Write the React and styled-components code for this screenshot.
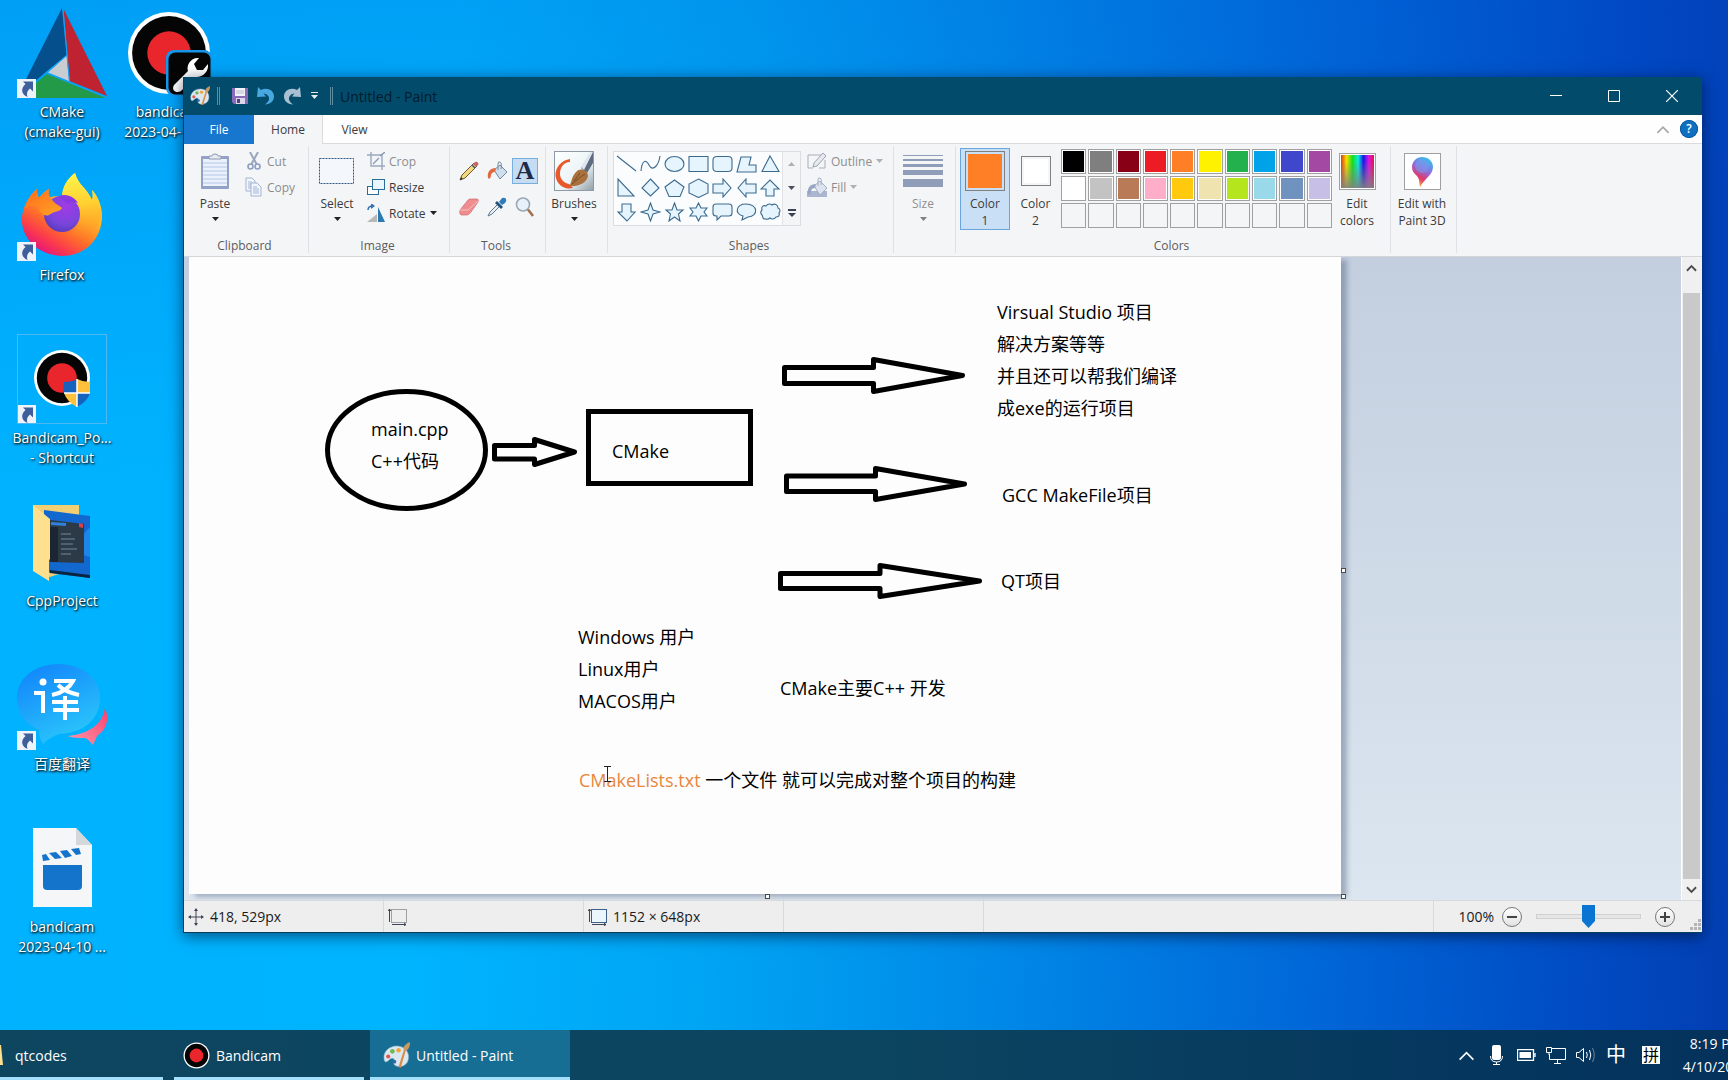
import React, { useState } from "react";
import styled, { createGlobalStyle, css } from "styled-components";

const GlobalStyle = createGlobalStyle`
  * {
    box-sizing: border-box;
  }
  html,
  body,
  #root {
    height: 100%;
  }
  body {
    margin: 0;
    overflow: hidden;
    font-family: "Open Sans", "Noto Sans CJK SC", sans-serif;
    font-size: 12px;
    color: #3b3b3b;
  }
  button {
    margin: 0;
    padding: 0;
    border: 0;
    background: none;
    font: inherit;
    color: inherit;
  }
  svg {
    display: block;
    flex: none;
  }
`;

/* ---------- desktop ---------- */

const Desktop = styled.div`
  position: relative;
  display: flex;
  flex-direction: column;
  height: 100vh;
  overflow: hidden;
  background: linear-gradient(
      180deg,
      rgba(0, 60, 200, 0.16),
      rgba(0, 60, 200, 0) 45%
    ),
    linear-gradient(
      93deg,
      #00b2ff 0%,
      #00b4fe 26%,
      #00a5f4 42%,
      #008ae8 58%,
      #0068d8 76%,
      #004cc4 91%,
      #033eb2 100%
    );
`;
const ShortcutGrid = styled.main`
  flex: 1;
  display: grid;
  grid-auto-flow: column;
  grid-template-rows: repeat(6, 163px);
  grid-auto-columns: 106px;
  padding: 8px 9px 0;
`;
const Shortcut = styled.button`
  display: flex;
  flex-direction: column;
  align-items: center;
  justify-content: flex-start;
  gap: 4px;
`;
const ShortcutIcon = styled.span`
  display: block;
  width: 90px;
  height: 90px;
  outline: ${(p) => (p.$focused ? "1px solid #4cb9f5" : "none")};
  outline-offset: -1px;
`;
const ShortcutLabel = styled.span`
  font-size: 14px;
  line-height: 20px;
  white-space: pre;
  color: #fff;
  text-shadow: 1px 1px 2px rgba(0, 0, 0, 0.9), 0 1px 3px rgba(0, 0, 0, 0.6);
`;

/* ---------- window frame ---------- */

const Window = styled.section`
  position: absolute;
  inset: 77px 26px 147px 183px;
  display: flex;
  flex-direction: column;
  border: 1px solid #06405c;
  border-width: 0 0 1px 1px;
  background: #fdfdfd;
  box-shadow: 0 3px 14px rgba(0, 10, 40, 0.6);
`;
const TitleBar = styled.header`
  display: flex;
  align-items: center;
  height: 38px;
  padding: 0 1px 0 6px;
  background: #034b6b;
`;
const QuickAccess = styled.div`
  display: flex;
  align-items: center;
`;
const QuickButton = styled.button`
  display: flex;
  align-items: center;
  justify-content: center;
  width: ${(p) => p.$width || 26}px;
  height: 22px;
`;
const TitleDivider = styled.span`
  width: 3px;
  height: 18px;
  margin: 0 7px;
  border: 1px solid #5f8ba0;
  border-width: 0 1px;
`;
const Title = styled.h1`
  flex: 1;
  margin: 0;
  font-size: 14px;
  font-weight: 400;
  color: #001c2c;
`;
const CaptionButton = styled.button`
  display: flex;
  align-items: center;
  justify-content: center;
  width: 58px;
  height: 38px;
`;

/* ---------- ribbon ---------- */

const TabBar = styled.nav`
  display: flex;
  align-items: center;
  height: 29px;
  border-bottom: 1px solid #dadbdc;
  background: #fefefe;
`;
const Tab = styled.button`
  width: ${(p) => p.$width}px;
  height: 29px;
  color: ${(p) => (p.$file ? "#fff" : "#3b3b3b")};
  background: ${(p) => (p.$file ? "#1777cf" : "transparent")};
  ${(p) =>
    p.$active &&
    css`
      border-right: 1px solid #dadbdc;
      background: #f4f5f7;
    `}
`;
const TabBarEnd = styled.div`
  display: flex;
  align-items: center;
  gap: 10px;
  margin-left: auto;
  padding-right: 4px;
`;
const HelpButton = styled.button`
  width: 18px;
  height: 18px;
  border-radius: 50%;
  background: #0f6fc0;
  box-shadow: inset 0 0 0 1px #0a5a9e;
  color: #fff;
  font-weight: 600;
  line-height: 18px;
`;
const Ribbon = styled.div`
  display: flex;
  height: 113px;
  padding: 2px 0 3px;
  border-bottom: 1px solid #d4d6d9;
  background: #f4f5f7;
`;
const RibbonGroup = styled.section`
  display: flex;
  flex-direction: column;
  justify-content: space-between;
  flex: none;
  width: ${(p) => p.$width}px;
  border-right: 1px solid #e0e1e4;
`;
const GroupBody = styled.div`
  display: flex;
  align-items: flex-start;
  gap: 2px;
  padding: 2px 0 0 ${(p) => p.$pad || 2}px;
`;
const GroupLabel = styled.h2`
  margin: 0;
  padding-right: 3px;
  font-size: 12px;
  font-weight: 400;
  line-height: 14px;
  text-align: center;
  color: #5c5c5c;
`;
const BigButton = styled.button`
  display: flex;
  flex-direction: column;
  align-items: center;
  width: ${(p) => p.$width || 52}px;
  height: 82px;
  border: 1px solid ${(p) => (p.$active ? "#6aa6dd" : "transparent")};
  background: ${(p) => (p.$active ? "#c9dff5" : "transparent")};
  line-height: 17px;
  white-space: pre;
  opacity: ${(p) => (p.$muted ? 0.55 : 1)};
`;
const BigIcon = styled.span`
  display: flex;
  align-items: center;
  justify-content: center;
  height: 44px;
  margin-bottom: 2px;
`;
const SmallStack = styled.div`
  display: flex;
  flex-direction: column;
  padding-left: ${(p) => p.$indent || 0}px;
`;
const SmallButton = styled.button`
  display: flex;
  align-items: center;
  gap: 4px;
  height: 26px;
  padding-left: 2px;
  color: ${(p) => (p.$muted ? "#8d8d8d" : "#3b3b3b")};
`;
const ToolGrid = styled.div`
  display: grid;
  grid-template-columns: repeat(3, 26px);
  gap: 10px 2px;
  padding-top: 10px;
`;
const ToolButton = styled.button`
  display: flex;
  align-items: center;
  justify-content: center;
  height: 26px;
  border: 1px solid ${(p) => (p.$active ? "#78aede" : "transparent")};
  background: ${(p) => (p.$active ? "#c6dcf3" : "transparent")};
`;
const LetterA = styled.span`
  font-family: "Liberation Serif", serif;
  font-size: 26px;
  font-weight: 700;
  line-height: 24px;
  color: #1c2b4a;
`;
const Framed = styled.span`
  display: block;
  padding: 1px;
  border: 1px solid #a0a0a0;
  background: #fff;
`;
const Gallery = styled.div`
  display: flex;
  height: 75px;
  margin-top: 3px;
  border: 1px solid #dcdde0;
  background: #fafcfe;
`;
const ShapeGrid = styled.div`
  display: grid;
  grid-template-columns: repeat(7, 24px);
  grid-auto-rows: 24px;
  border-right: 1px solid #e3e3e6;
`;
const ShapeButton = styled.button`
  display: flex;
  align-items: center;
  justify-content: center;
`;
const GalleryScroll = styled.div`
  display: grid;
  grid-template-rows: repeat(3, 1fr);
  width: 17px;
  background: #f4f5f7;
`;
const Swatch = styled.span`
  display: block;
  width: ${(p) => p.$size}px;
  height: ${(p) => p.$size}px;
  border: 1px solid #808080;
  padding: 2px;
  background: ${(p) => p.$color} content-box;
`;
const Palette = styled.div`
  display: grid;
  grid-template-columns: repeat(10, 1fr);
  grid-auto-rows: 25px;
  gap: 2px;
  width: 271px;
  padding-top: 1px;
`;
const PaletteCell = styled.button`
  padding: 1px;
  border: 1px solid #a0a0a0;
  background-clip: content-box;
  background-color: ${(p) => p.$color || "transparent"};
  box-shadow: ${(p) => (p.$color ? "inset 0 0 0 1px #fff" : "none")};
`;

/* ---------- canvas area ---------- */

const Workspace = styled.div`
  position: relative;
  flex: 1;
  display: flex;
  min-height: 0;
  overflow: hidden;
  background: linear-gradient(#c3cedf, #dce6f0);
`;
const SheetClip = styled.div`
  flex: 1;
  min-width: 0;
  overflow: hidden;
  padding: 0 0 6px 5px;
`;
const Sheet = styled.div`
  position: relative;
  width: 1152px;
  height: 100%;
  background: #fdfdfd;
  box-shadow: 6px 3px 5px rgba(70, 90, 120, 0.4);
`;
const Note = styled.p`
  position: absolute;
  left: ${(p) => p.$x}px;
  top: ${(p) => p.$y}px;
  margin: 0;
  font-size: 18px;
  line-height: 32px;
  white-space: pre;
  color: #000;
`;
const Orange = styled.span`
  color: #e8873e;
`;
const Drawing = styled.svg`
  position: absolute;
  left: 0;
  top: 0;
`;
const Handle = styled.span`
  position: absolute;
  left: ${(p) => p.$left};
  top: ${(p) => p.$top};
  width: 5px;
  height: 5px;
  border: 1px solid #4a4a4a;
  background: #fff;
`;
const ScrollBar = styled.div`
  display: flex;
  flex-direction: column;
  width: 21px;
  padding: 0 2px 0 1px;
  border-left: 1px solid #fff;
  background: #f0f0f1;
`;
const ScrollButton = styled.button`
  display: flex;
  align-items: center;
  justify-content: center;
  height: 21px;
`;
const ScrollTrack = styled.div`
  flex: 1;
  padding-top: 15px;
`;
const ScrollThumb = styled.div`
  height: 100%;
  background: #c9c9ca;
`;

/* ---------- status bar ---------- */

const StatusBar = styled.footer`
  display: flex;
  align-items: stretch;
  height: 32px;
  border-top: 1px solid #d8dade;
  background: #eeeeef;
  font-size: 14px;
  color: #1a1a1a;
`;
const StatusCell = styled.div`
  display: flex;
  align-items: center;
  gap: 6px;
  width: 200px;
  padding-left: 4px;
  border-right: 1px solid #d9d9da;
`;
const ZoomControls = styled.div`
  display: flex;
  align-items: center;
  gap: 8px;
  margin-left: auto;
  padding-left: 24px;
  border-left: 1px solid #d9d9da;
`;
const RoundButton = styled.button`
  display: flex;
  align-items: center;
  justify-content: center;
  width: 20px;
  height: 20px;
  border: 1px solid #777;
  border-radius: 50%;
  background: linear-gradient(#fff, #e2e2e2);
`;
const ZoomSlider = styled.input`
  appearance: none;
  width: 105px;
  height: 24px;
  margin: 0 6px;
  background: transparent;
  &::-webkit-slider-runnable-track {
    height: 5px;
    border: 1px solid #d0d0d0;
    background: #e6e6e6;
  }
  &::-webkit-slider-thumb {
    appearance: none;
    width: 13px;
    height: 23px;
    margin-top: -10px;
    background: #0a74d3;
    clip-path: polygon(0 0, 100% 0, 100% 70%, 50% 100%, 0 70%);
  }
`;
const Grip = styled.span`
  align-self: flex-end;
  margin: 0 1px 2px 7px;
`;

/* ---------- task bar ---------- */

const TaskBar = styled.nav`
  display: flex;
  align-items: stretch;
  gap: 6px;
  height: 50px;
  overflow: hidden;
  background: linear-gradient(90deg, #0e4660, #0c4560 50%, #05375e 85%, #04325c);
  color: #fff;
  font-size: 14px;
`;
const Task = styled.button`
  display: flex;
  align-items: center;
  gap: 6px;
  width: ${(p) => p.$width}px;
  padding: 3px 0 0 ${(p) => p.$pad}px;
  border-bottom: 3px solid #a4e0fb;
  background: ${(p) => (p.$active ? "#176e94" : "transparent")};
  &:first-child {
    margin: 0 5px 0 -29px;
  }
`;
const Tray = styled.div`
  display: flex;
  align-items: center;
  flex: none;
  gap: 8px;
  margin: 0 -22px 0 auto;
`;
const TrayButton = styled.button`
  display: flex;
  align-items: center;
  justify-content: center;
  width: ${(p) => p.$width || 22}px;
  height: 40px;
`;
const ImeMode = styled.span`
  font-size: 20px;
  line-height: 20px;
`;
const ImeBadge = styled.span`
  width: 18px;
  height: 18px;
  background: #fff;
  color: #000;
  font-size: 16px;
  line-height: 18px;
`;
const Clock = styled.time`
  width: 68px;
  margin-left: 7px;
  line-height: 23px;
  text-align: center;
  white-space: pre;
`;

/* ---------- icons ---------- */

const Caret = ({ color = "#222", up }) => (
  <svg width="7" height="4" viewBox="0 0 7 4">
    <path d={up ? "M0 4L3.5 0L7 4Z" : "M0 0H7L3.5 4Z"} fill={color} />
  </svg>
);

const CaretSpace = styled.span`
  display: flex;
  align-items: center;
  height: ${(p) => (p.$tall ? 13 : 8)}px;
`;

const Chevron = ({ w, h, color, down, stroke = 2 }) => (
  <svg width={w} height={h} viewBox="0 0 12 8" fill="none">
    <path
      d={down ? "M1 1L6 6L11 1" : "M1 7L6 2L11 7"}
      stroke={color}
      strokeWidth={stroke}
    />
  </svg>
);

const ArrowOverlay = () => (
  <g>
    <rect x="0" y="71" width="19" height="19" fill="#eef3f9" />
    <path
      d="M6 73.500H16V83.500L13 80.500C10 83 9.500 85.500 10.500 89C5.500 87 2.500 81.500 8.500 76Z"
      fill="#3f5f9c"
    />
  </g>
);

const CMakeIcon = () => (
  <svg width="90" height="90" viewBox="0 0 90 90">
    <path d="M45 0L49.500 47L30 63L0 89Z" fill="#064f8d" />
    <path d="M46.500 1L52.500 73L90 88Z" fill="#bf2230" />
    <path d="M30 66L90 90H0Z" fill="#239a48" />
    <path d="M49.500 48L52 73L31 64.500Z" fill="#c9cdd2" />
    <path
      d="M46 1L52.500 73.500M30 65.500L89 89.500M49.500 47.500L29 65"
      stroke="#1b9ff0"
      strokeWidth="1"
    />
    <ArrowOverlay />
  </svg>
);

const FirefoxIcon = () => (
  <svg width="90" height="90" viewBox="0 0 90 90">
    <defs>
      <linearGradient id="ffBody" x1="0.8" y1="0.1" x2="0.25" y2="1">
        <stop offset="0" stopColor="#ffe83f" />
        <stop offset="0.35" stopColor="#ffb02a" />
        <stop offset="0.6" stopColor="#ff7228" />
        <stop offset="0.8" stopColor="#fb3a4c" />
        <stop offset="1" stopColor="#e00f84" />
      </linearGradient>
      <linearGradient id="ffFlame" x1="0.4" y1="0" x2="0.5" y2="1">
        <stop offset="0" stopColor="#fff44b" />
        <stop offset="0.5" stopColor="#ffcf30" />
        <stop offset="1" stopColor="#ff8a22" stopOpacity="0" />
      </linearGradient>
      <linearGradient id="ffFox" x1="0" y1="0" x2="1" y2="1">
        <stop offset="0" stopColor="#ff6a1c" />
        <stop offset="1" stopColor="#ffa624" />
      </linearGradient>
      <radialGradient id="ffGlobe" cx="0.6" cy="0.3" r="0.8">
        <stop offset="0" stopColor="#a13be6" />
        <stop offset="0.6" stopColor="#7a45dc" />
        <stop offset="1" stopColor="#5038b8" />
      </radialGradient>
    </defs>
    <path
      d="M20 18C13 24 7 33 5 45C3 66 20 84 45 85C68 85 85 68 85 45C85 35 81 25 75 19C76 23 76 26 75 29C70 17 61 14 58 2C51 7 46 16 45 26C40 25 35 25 32 27C31 24 31 21 32 18C28 20 25 23 22 27C20 24 20 21 20 18Z"
      fill="url(#ffBody)"
    />
    <path
      d="M58 2C50 8 45 16 45 26C58 26 65 37 63 48C61 60 52 65 52 65C66 70 82 60 84 44C84 34 80 24 75 19C76 23 76 27 75 29C70 17 61 14 58 2Z"
      fill="url(#ffFlame)"
    />
    <circle cx="45" cy="43" r="18" fill="url(#ffGlobe)" />
    <path d="M42 25C51 22 58 27 61 32C56 30 52 31 50 33Z" fill="#8a38e0" />
    <path
      d="M20 18C13 24 9 31 8 38C13 33 18 34 22 36C22 42 28 46 32 44C37 40 43 41 45 37C42 34 37 33 34 27C32 25 31 21 32 18C28 20 25 23 22 27C20 24 20 21 20 18Z"
      fill="url(#ffFox)"
    />
    <ArrowOverlay />
  </svg>
);

const BandicamDisc = ({ cx, cy, r }) => (
  <g>
    <circle cx={cx} cy={cy} r={r} fill="#fff" />
    <circle cx={cx} cy={cy} r={r * 0.9} fill="#050505" />
    <circle cx={cx} cy={cy} r={r * 0.53} fill="#e8262b" />
  </g>
);

const BandicamToolIcon = () => (
  <svg width="90" height="90" viewBox="0 0 90 90">
    <BandicamDisc cx={46} cy={45} r={41} />
    <rect x="43" y="42" width="46" height="46" rx="8" fill="#1696ea" />
    <rect x="45.500" y="44.500" width="42" height="42" rx="7" fill="#050505" />
    <path
      d="M51 77L65 63C63 57 68 49 76 50L71 56L74 62L80 62L85 56C86 64 79 70 72 69L58 83C53 86 48 82 51 77Z"
      fill="#fff"
    />
  </svg>
);

const BandicamIcon = () => (
  <svg width="90" height="90" viewBox="0 0 90 90">
    <BandicamDisc cx={45} cy={44} r={28} />
    <path d="M60 45V59H47C46 55 47 50 47 48Q55 48 60 45Z" fill="#1662bd" />
    <path d="M60 45Q66 48 73 48C73 52 73 56 73 59H60Z" fill="#ffc13b" />
    <path d="M47 59H60V73Q50 68 47 59Z" fill="#ffc13b" />
    <path d="M73 59H60V73Q70 68 73 59Z" fill="#1662bd" />
    <path d="M60 45V73M47 59H73" stroke="#fff" strokeWidth="1.500" />
    <ArrowOverlay />
  </svg>
);

const FolderIcon = () => (
  <svg width="90" height="90" viewBox="0 0 90 90">
    <path d="M16 8H62V70L33 80L16 74Z" fill="#f2cf73" />
    <path d="M27 13L73 19V81L27 75Z" fill="#1368cf" />
    <path d="M62 42L73 30V60L66 58Z" fill="#1d86e8" />
    <path d="M33 23L67 27V66L33 65Z" fill="#2c3947" />
    <path d="M34 25L49 26V29L34 28Z" fill="#2f80d8" />
    <path d="M62 26L66 27V31L62 30Z" fill="#d8404a" />
    <path
      d="M44 37H54M44 42H58M44 47H56M44 52H60M44 57H54"
      stroke="#6f8a9c"
      strokeWidth="1"
    />
    <path d="M33 30H41V65H33Z" fill="#1b2632" />
    <path d="M33 73L73 78V81L33 76Z" fill="#0a2540" />
    <path d="M16 8L33 22V62L32 63V84L16 74Z" fill="#ffe08e" />
  </svg>
);

const TranslateIcon = () => (
  <svg width="90" height="90" viewBox="0 0 90 90">
    <defs>
      <linearGradient id="bubble" x1="0.2" y1="0" x2="0.7" y2="1">
        <stop offset="0" stopColor="#1286fb" />
        <stop offset="1" stopColor="#2cc9fb" />
      </linearGradient>
      <linearGradient id="ribbon" x1="1" y1="0" x2="0" y2="1">
        <stop offset="0" stopColor="#fb3f6f" />
        <stop offset="1" stopColor="#ff9aa8" />
      </linearGradient>
    </defs>
    <path
      d="M42 4C64 4 83 18 83 38C83 60 66 73 42 74C36 76 30 80 26 84C23 80 22 75 22 70C8 64 0 54 0 38C0 18 18 4 42 4Z"
      fill="url(#bubble)"
    />
    <path
      d="M88 48C92 58 91 68 80 76L76 85C73 82 71 79 68 78C62 78 56 78 51 76C70 74 85 66 88 48Z"
      fill="url(#ribbon)"
    />
    <circle cx="26" cy="22" r="3.500" fill="#fff" />
    <path
      d="M17 33H26V53M37 21H56C52 29 44 33 35 35M41 25C46 30 53 33 62 35M35 42H61M36 50H62M48 36V60"
      fill="none"
      stroke="#fff"
      strokeWidth="4"
    />
    <ArrowOverlay />
  </svg>
);

const VideoFileIcon = () => (
  <svg width="90" height="90" viewBox="0 0 90 90">
    <path d="M16 5H59L75 22V84H16Z" fill="#f5f6f7" />
    <path d="M59 5L75 22H59Z" fill="#d5d8db" />
    <path d="M26 42H65V63Q65 67 61 67H30Q26 67 26 63Z" fill="#1474cc" />
    <path
      d="M25 32L29 31L33 37L26 38ZM32 30L39 29L45 35L38 36ZM43 28L50 27L55 33L48 35ZM54 26L62 25L64 31L59 32Z"
      fill="#1474cc"
    />
  </svg>
);

const PaletteIcon = ({ size }) => (
  <svg width={size} height={size} viewBox="0 0 26 26">
    <path
      d="M1 16C0 8 8 3 15 4C23 5 26 12 24 18C22 24 14 25 11 22C9 20 12 17 10 16C7 14 5 20 2 19Q1 18 1 16Z"
      fill="#dbe8f2"
      stroke="#9ab4c6"
      strokeWidth="0.6"
    />
    <circle cx="5" cy="14" r="2" fill="#e0574b" />
    <circle cx="9" cy="9" r="2.200" fill="#6fb750" />
    <circle cx="15" cy="8" r="2.200" fill="#f2a53a" />
    <circle cx="11" cy="19" r="1.800" fill="#2e6aa8" />
    <path d="M20 8L22 8L17 25L15 24Z" fill="#d98b45" />
    <path d="M20 8C19 5 21 2 26 0C26 4 25 7 22 9Z" fill="#c69b62" />
  </svg>
);

const SaveIcon = () => (
  <svg width="16" height="16" viewBox="0 0 16 16">
    <path d="M0 0H16V16H2L0 14Z" fill="#8a6bb8" />
    <rect x="3" y="0" width="10" height="8" fill="#f3f4fa" />
    <path d="M4 3H12M4 5H12" stroke="#b8bcd0" strokeWidth="1" />
    <rect x="4" y="10" width="9" height="6" fill="#dcd8ea" />
    <rect x="5" y="11" width="3" height="4" fill="#54407c" />
  </svg>
);

const UndoIcon = ({ color, flip }) => (
  <svg width="18" height="18" viewBox="0 0 18 18">
    <g transform={flip ? "translate(18 0) scale(-1 1)" : undefined}>
      <path
        d="M1 0L4 3C10 0 17 3 17 9.500C17 14 13.500 17 8 17.500C11.500 15 13 12 11.500 9.500C10.500 7.500 8.500 6.500 6.500 6.500L9 9.500L0 10Z"
        fill={color}
      />
    </g>
  </svg>
);

const PasteIcon = () => (
  <svg width="30" height="37" viewBox="0 0 30 37">
    <rect x="1" y="3" width="28" height="33" rx="1" fill="#93a1c6" />
    <rect x="3" y="6" width="24" height="27" fill="#eaf1fb" />
    <path
      d="M3 10H27M3 14H27M3 18H27M3 22H27M3 26H27M3 30H27"
      stroke="#b4c6e6"
    />
    <path
      d="M9 6V3H12Q12 1 15 1Q18 1 18 3H21V6Z"
      fill="#e6ebf4"
      stroke="#8c97b0"
    />
  </svg>
);

const CutIcon = () => (
  <svg width="18" height="18" viewBox="0 0 18 18" fill="none">
    <path d="M5 0L11.500 12M13 0L6.500 12" stroke="#9aa7be" strokeWidth="2" />
    <circle cx="5.500" cy="14.500" r="2.500" stroke="#8d9cc0" strokeWidth="1.600" />
    <circle cx="12.500" cy="14.500" r="2.500" stroke="#8d9cc0" strokeWidth="1.600" />
  </svg>
);

const CopyIcon = () => (
  <svg width="18" height="20" viewBox="0 0 18 20" stroke="#a3b3d3">
    <path d="M1 1H7L10 4V14H1Z" fill="#f3f7fd" />
    <path d="M3 5H7M3 7H7M3 9H7M3 11H7" />
    <path d="M6 6H12L16 10V19H6Z" fill="#f3f7fd" />
    <path d="M8 10H12M8 12H14M8 14H14M8 16H14" />
  </svg>
);

const SelectIcon = () => (
  <svg width="36" height="28" viewBox="0 0 36 28">
    <rect
      x="0.500"
      y="1.500"
      width="34"
      height="25"
      fill="#f4f8fc"
      stroke="#2c5584"
      strokeWidth="1"
      strokeDasharray="2 1"
    />
  </svg>
);

const CropIcon = () => (
  <svg width="18" height="18" viewBox="0 0 18 18" fill="none">
    <path d="M0 3H15V18M4 0V14H18" stroke="#9aa8bf" strokeWidth="1.400" />
    <path d="M6 12L12 6M13 4L18 0" stroke="#8c9ab4" strokeWidth="1.400" />
  </svg>
);

const ResizeIcon = () => (
  <svg width="18" height="16" viewBox="0 0 18 16" stroke="#2c6d96">
    <rect x="0.500" y="7.500" width="11" height="8" fill="#fff" />
    <rect x="5.500" y="0.500" width="12" height="10" fill="#e9f6fd" />
  </svg>
);

const RotateIcon = () => (
  <svg width="18" height="18" viewBox="0 0 18 18">
    <path d="M0 18L10 10V18Z" fill="#b8b8b8" />
    <path d="M11 18V3L18 18Z" fill="#2a7ab0" />
    <path d="M1 6C1 3 3 2 6 2" fill="none" stroke="#3172b4" strokeWidth="1.500" />
    <path d="M4 -1L8 2L4 5Z" fill="#3172b4" />
  </svg>
);

const PencilIcon = () => (
  <svg width="20" height="20" viewBox="0 0 20 20">
    <path d="M1 19L3 14L15 2L18 5L6 17Z" fill="#f4d97c" stroke="#6b5a36" />
    <path d="M14 3L16 1Q18 0 19 2Q20 3 19 4L17 6Z" fill="#c9606a" />
    <path d="M13 4L16 7" stroke="#4a5a78" strokeWidth="1.600" />
    <path d="M1 19L2 16L4 18Z" fill="#333" />
  </svg>
);

const BucketIcon = ({ muted }) => (
  <svg width="20" height="20" viewBox="0 0 20 20">
    {muted && <rect x="0" y="14" width="20" height="6" fill="#aab6d0" />}
    <path
      d="M7 9L13 4L20 11L13 18Z"
      fill={muted ? "#dde3ee" : "#cfdfee"}
      stroke={muted ? "#a4aec2" : "#6d89a6"}
    />
    <path
      d="M11 9V3Q11 0 13 1Q15 2 14 8"
      fill="none"
      stroke={muted ? "#a4aec2" : "#7a8798"}
    />
    <path
      d="M9 7C3 7 0 11 1 17C3 19 4 16 4 14C5 11 7 11 8 11Z"
      fill={muted ? "#97a6c4" : "#e0693e"}
    />
  </svg>
);

const EraserIcon = () => (
  <svg width="20" height="18" viewBox="0 0 20 18">
    <path
      d="M1 12L9 2Q10 1 11 1H18Q20 1 19 4L12 14Q10 17 8 17H2Q0 16 1 12Z"
      fill="#ee8c8f"
      stroke="#cf7074"
      strokeWidth="0.7"
    />
    <path d="M1 12H9L19 3" fill="none" stroke="#f8c0c0" />
  </svg>
);

const PickerIcon = () => (
  <svg width="20" height="20" viewBox="0 0 20 20">
    <path d="M1 19L3 15L11 7L13 9L5 17Z" fill="#e8eff6" stroke="#5c7690" />
    <path d="M10 4L16 10L14 12L8 6Z" fill="#24527e" />
    <path d="M12 5L15 1Q18 0 19 2Q20 4 18 6L15 8Z" fill="#2e7cba" />
  </svg>
);

const MagnifierIcon = () => (
  <svg width="20" height="20" viewBox="0 0 20 20">
    <circle
      cx="8"
      cy="7.500"
      r="6.500"
      fill="#e6f1fa"
      stroke="#9aa8b4"
      strokeWidth="1.600"
    />
    <path d="M13 12.500L18 19" stroke="#a0714c" strokeWidth="2.600" />
  </svg>
);

const BrushIcon = () => (
  <svg width="40" height="40" viewBox="0 0 40 40">
    <defs>
      <linearGradient id="brushBg" x1="0" y1="0" x2="1" y2="1">
        <stop offset="0" stopColor="#fff" />
        <stop offset="0.6" stopColor="#eaf4f6" />
        <stop offset="1" stopColor="#8f9da6" />
      </linearGradient>
    </defs>
    <rect
      x="0.500"
      y="0.500"
      width="39"
      height="39"
      fill="url(#brushBg)"
      stroke="#8f9aa6"
    />
    <path
      d="M16 8C8 9 1 16 1.500 25C3 34 10 39 19 37L15 33C10 32 6 28 6 23C6 16 10 11 16 11Z"
      fill="#e8582a"
    />
    <path d="M27 17L38 1H39V12L33 22Z" fill="#5d6a80" />
    <path d="M27 16L36 1H39L30 19Z" fill="#dfe6ee" />
    <path
      d="M15 35C18 32 17 26 22 21C26 16 34 19 34 25C33 32 24 36 15 35Z"
      fill="#a9713d"
    />
    <path
      d="M18 33C23 29 26 26 31 23M20 30L26 22"
      stroke="#7a4a22"
      fill="none"
    />
  </svg>
);

const SizeIcon = () => (
  <svg width="40" height="34" viewBox="0 0 40 34" fill="#3d5688">
    <rect y="1" width="40" height="1" />
    <rect y="5" width="40" height="2" />
    <rect y="10" width="40" height="3" />
    <rect y="16" width="40" height="5" />
    <rect y="25" width="40" height="8" />
  </svg>
);

const OutlineIcon = () => (
  <svg width="20" height="18" viewBox="0 0 20 18" fill="none">
    <path d="M15 3H1V16H6M18 8V16H12" stroke="#a7adb8" />
    <path d="M6 15L7 11L16 1L19 4L10 14Z" fill="#e6e9ef" stroke="#9aa3b5" />
  </svg>
);

const RainbowIcon = () => (
  <svg width="33" height="33" viewBox="0 0 33 33">
    <defs>
      <linearGradient id="hue">
        <stop offset="0" stopColor="#e03a10" />
        <stop offset="0.17" stopColor="#f5e000" />
        <stop offset="0.35" stopColor="#10e020" />
        <stop offset="0.52" stopColor="#10e8e0" />
        <stop offset="0.68" stopColor="#1818e8" />
        <stop offset="0.84" stopColor="#d818e0" />
        <stop offset="1" stopColor="#e81040" />
      </linearGradient>
      <linearGradient id="fade" x2="0" y2="1">
        <stop offset="0.2" stopColor="#808080" stopOpacity="0" />
        <stop offset="1" stopColor="#808080" stopOpacity="0.900" />
      </linearGradient>
    </defs>
    <rect width="33" height="33" fill="url(#hue)" />
    <rect width="33" height="33" fill="url(#fade)" />
  </svg>
);

const Paint3DIcon = () => (
  <svg width="33" height="33" viewBox="0 0 33 33">
    <defs>
      <linearGradient id="drop" x1="0.7" y1="0" x2="0.3" y2="1">
        <stop offset="0" stopColor="#2fc4ee" />
        <stop offset="0.4" stopColor="#8a6fe0" />
        <stop offset="0.7" stopColor="#e0386c" />
        <stop offset="1" stopColor="#ffb030" />
      </linearGradient>
    </defs>
    <path
      d="M16 2C22 2 27 6 27 12C27 20 18 24 14 32C13 28 14 25 11 21C8 18 6 16 6 12C6 6 11 2 16 2Z"
      fill="url(#drop)"
    />
    <circle cx="16" cy="11" r="7" fill="#7aa0f0" opacity="0.500" />
  </svg>
);

const shapes = [
  ["Line", "M1 2L20 17"],
  ["Curve", "M1 17C2 6 6 5 9 11C13 19 19 10 20 2"],
  ["Oval", "M1 10A9.500 7.500 0 1 1 20 10A9.500 7.500 0 1 1 1 10Z"],
  ["Rectangle", "M1 2.500H20V17.500H1Z"],
  [
    "Rounded rectangle",
    "M5 2.500H16Q20 2.500 20 6V14Q20 17.500 16 17.500H5Q1 17.500 1 14V6Q1 2.500 5 2.500Z",
  ],
  ["Polygon", "M5 3H15L13 11H20V18H1Z"],
  ["Triangle", "M10 2L19 17.500H2Z"],
  ["Right triangle", "M2 1V18H18Z"],
  ["Diamond", "M10.500 1L19 10L10.500 18L2 10Z"],
  ["Pentagon", "M10.500 2L20 9L16 18.500H5L1 9Z"],
  ["Hexagon", "M10.500 1L20 6V15L10.500 19.500L1 15V6Z"],
  ["Right arrow", "M1 6H11V1L19 10L11 19V15H1Z"],
  ["Left arrow", "M20 6H10V1L2 10L10 19V15H20Z"],
  ["Up arrow", "M6 18V11H1L10 2L19 11H14V18Z"],
  ["Down arrow", "M6 2V10H2L11 19L19 10H15V2Z"],
  [
    "Four-point star",
    "M10.500 1L13 8L20 10L13 12L10.500 19L8 12L1 10L8 8Z",
  ],
  [
    "Five-point star",
    "M10.500 1L13 8H19L14.500 12L16 19L10.500 15L5 19L6.500 12L2 8H8Z",
  ],
  [
    "Six-point star",
    "M10.500 1L13 6H19L16 10L19 14H13L10.500 19L8 14H2L5 10L2 6H8Z",
  ],
  [
    "Rounded callout",
    "M4 2H17Q20 2 20 5V11Q20 14 17 14H9L5 18V14H4Q1 14 1 11V5Q1 2 4 2Z",
  ],
  ["Oval callout", "M6 18L7 14C-2 12 0 2 10 2C22 2 23 14 12 15Z"],
  [
    "Cloud callout",
    "M5 17C2 17 3 14 2 13C0 11 1 9 2 8C1 4 4 3 6 4C8 1 11 2 12 3C15 1 18 3 18 6C21 7 20 10 19 11C20 14 18 15 16 15C14 18 11 17 10 16C8 18 7 17 5 17Z",
  ],
];

const paletteColors = [
  ["Black", "#000000"],
  ["Gray 50%", "#7f7f7f"],
  ["Dark red", "#880015"],
  ["Red", "#ed1c24"],
  ["Orange", "#ff7f27"],
  ["Yellow", "#fff200"],
  ["Green", "#22b14c"],
  ["Turquoise", "#00a2e8"],
  ["Indigo", "#3f48cc"],
  ["Purple", "#a349a4"],
  ["White", "#ffffff"],
  ["Gray 25%", "#c3c3c3"],
  ["Brown", "#b97a57"],
  ["Rose", "#ffaec9"],
  ["Gold", "#ffc90e"],
  ["Light yellow", "#efe4b0"],
  ["Lime", "#b5e61d"],
  ["Light turquoise", "#99d9ea"],
  ["Blue-gray", "#7092be"],
  ["Lavender", "#c8bfe7"],
];
const emptySlots = Array.from({ length: 10 }, (_, i) => [`Custom ${i + 1}`]);

const shortcuts = [
  { label: "CMake\n(cmake-gui)", Icon: CMakeIcon },
  { label: "Firefox", Icon: FirefoxIcon },
  { label: "Bandicam_Po...\n- Shortcut", Icon: BandicamIcon, focused: true },
  { label: "CppProject", Icon: FolderIcon },
  { label: "百度翻译", Icon: TranslateIcon },
  { label: "bandicam\n2023-04-10 ...", Icon: VideoFileIcon },
  { label: "bandicam\n2023-04-10 ...", Icon: BandicamToolIcon },
];

const notes = [
  { x: 182, y: 156, text: "main.cpp\nC++代码" },
  { x: 423, y: 178, text: "CMake" },
  {
    x: 808,
    y: 39,
    text: "Virsual Studio 项目\n解决方案等等\n并且还可以帮我们编译\n成exe的运行项目",
  },
  { x: 813, y: 222, text: "GCC MakeFile项目" },
  { x: 812, y: 308, text: "QT项目" },
  { x: 389, y: 364, text: "Windows 用户\nLinux用户\nMACOS用户" },
  { x: 591, y: 415, text: "CMake主要C++ 开发" },
];

const Big = ({ icon, label, caret, ...rest }) => (
  <BigButton {...rest}>
    <BigIcon>{icon}</BigIcon>
    {label}
    {caret && (
      <CaretSpace $tall>
        <Caret />
      </CaretSpace>
    )}
  </BigButton>
);

const RibbonBar = () => (
  <Ribbon>
    <RibbonGroup $width={125}>
      <GroupBody $pad={5}>
        <Big icon={<PasteIcon />} label="Paste" caret />
        <SmallStack>
          <SmallButton $muted>
            <CutIcon />
            Cut
          </SmallButton>
          <SmallButton $muted>
            <CopyIcon />
            Copy
          </SmallButton>
        </SmallStack>
      </GroupBody>
      <GroupLabel>Clipboard</GroupLabel>
    </RibbonGroup>
    <RibbonGroup $width={141}>
      <GroupBody>
        <Big icon={<SelectIcon />} label="Select" caret />
        <SmallStack>
          <SmallButton $muted>
            <CropIcon />
            Crop
          </SmallButton>
          <SmallButton>
            <ResizeIcon />
            Resize
          </SmallButton>
          <SmallButton>
            <RotateIcon />
            Rotate
            <CaretSpace>
              <Caret />
            </CaretSpace>
          </SmallButton>
        </SmallStack>
      </GroupBody>
      <GroupLabel>Image</GroupLabel>
    </RibbonGroup>
    <RibbonGroup $width={96}>
      <GroupBody $pad={6}>
        <ToolGrid>
          <ToolButton aria-label="Pencil">
            <PencilIcon />
          </ToolButton>
          <ToolButton aria-label="Fill with color">
            <BucketIcon />
          </ToolButton>
          <ToolButton aria-label="Text" $active>
            <LetterA>A</LetterA>
          </ToolButton>
          <ToolButton aria-label="Eraser">
            <EraserIcon />
          </ToolButton>
          <ToolButton aria-label="Color picker">
            <PickerIcon />
          </ToolButton>
          <ToolButton aria-label="Magnifier">
            <MagnifierIcon />
          </ToolButton>
        </ToolGrid>
      </GroupBody>
      <GroupLabel>Tools</GroupLabel>
    </RibbonGroup>
    <RibbonGroup $width={62}>
      <GroupBody>
        <Big icon={<BrushIcon />} label="Brushes" caret />
      </GroupBody>
    </RibbonGroup>
    <RibbonGroup $width={286}>
      <GroupBody $pad={5}>
        <Gallery>
          <ShapeGrid>
            {shapes.map(([name, d]) => (
              <ShapeButton key={name} aria-label={name}>
                <svg width="21" height="20" viewBox="0 0 21 20">
                  <path
                    d={d}
                    fill={d.endsWith("Z") ? "#e6f5fd" : "none"}
                    stroke="#3c6a8e"
                    strokeWidth="1.100"
                  />
                </svg>
              </ShapeButton>
            ))}
          </ShapeGrid>
          <GalleryScroll>
            <ShapeButton aria-label="Row up">
              <Caret up color="#b0b0b4" />
            </ShapeButton>
            <ShapeButton aria-label="Row down">
              <Caret color="#4a4f5c" />
            </ShapeButton>
            <ShapeButton aria-label="More shapes">
              <svg width="8" height="8" viewBox="0 0 8 8" fill="#3c4150">
                <path d="M0 0H8V2H0ZM0 4H8L4 8Z" />
              </svg>
            </ShapeButton>
          </GalleryScroll>
        </Gallery>
        <SmallStack $indent={2}>
          <SmallButton $muted>
            <OutlineIcon />
            Outline
            <CaretSpace>
              <Caret color="#b0b0b4" />
            </CaretSpace>
          </SmallButton>
          <SmallButton $muted>
            <BucketIcon muted />
            Fill
            <CaretSpace>
              <Caret color="#b0b0b4" />
            </CaretSpace>
          </SmallButton>
        </SmallStack>
      </GroupBody>
      <GroupLabel>Shapes</GroupLabel>
    </RibbonGroup>
    <RibbonGroup $width={62}>
      <GroupBody>
        <Big icon={<SizeIcon />} label="Size" caret $muted $width={54} />
      </GroupBody>
    </RibbonGroup>
    <RibbonGroup $width={435}>
      <GroupBody $pad={4}>
        <Big
          icon={<Swatch $size={40} $color="#ff7f27" />}
          label={"Color\n1"}
          $active
          $width={50}
        />
        <Big
          icon={<Swatch $size={30} $color="#fff" />}
          label={"Color\n2"}
          $width={47}
        />
        <Palette>
          {[...paletteColors, ...emptySlots].map(([name, color]) => (
            <PaletteCell key={name} aria-label={name} $color={color} />
          ))}
        </Palette>
        <Big
          icon={
            <Framed>
              <RainbowIcon />
            </Framed>
          }
          label={"Edit\ncolors"}
          $width={46}
        />
      </GroupBody>
      <GroupLabel>Colors</GroupLabel>
    </RibbonGroup>
    <RibbonGroup $width={66}>
      <GroupBody>
        <Big
          icon={
            <Framed>
              <Paint3DIcon />
            </Framed>
          }
          label={"Edit with\nPaint 3D"}
          $width={58}
        />
      </GroupBody>
    </RibbonGroup>
  </Ribbon>
);

const DrawingArea = () => (
  <Workspace>
    <SheetClip>
      <Sheet>
        <Drawing
          width="1152"
          height="637"
          viewBox="0 0 1152 637"
          fill="none"
          stroke="#000"
          strokeWidth="5"
        >
          <ellipse cx="217.500" cy="193" rx="79" ry="58.500" />
          <rect x="399.500" y="154.500" width="162" height="72" />
          <g strokeLinejoin="round">
            <path d="M305.500 188.500H345.500V182.500L385.500 195L345.500 207.500V202H305.500Z" />
            <path d="M595.500 110.500H684.500V102.500L773.500 118.500L684.500 134.500V126.500H595.500Z" />
            <path d="M597.500 219H686.500V211.500L775.500 227L686.500 242.500V234.500H597.500Z" />
            <path d="M591.500 316.500H691V308.500L790.500 324L691 339.500V331.500H591.500Z" />
          </g>
        </Drawing>
        {notes.map((note) => (
          <Note key={note.text} $x={note.x} $y={note.y}>
            {note.text}
          </Note>
        ))}
        <Note $x={390} $y={507}>
          <Orange>CMakeLists.txt</Orange> 一个文件 就可以完成对整个项目的构建
        </Note>
        <Drawing width="1152" height="637" viewBox="0 0 1152 637" fill="none">
          <path
            d="M415 509.500H422M418.500 510V524M415 524.500H422"
            stroke="#222"
          />
        </Drawing>
        <Handle $left="100%" $top="311px" />
        <Handle $left="50%" $top="100%" />
        <Handle $left="100%" $top="100%" />
      </Sheet>
    </SheetClip>
    <ScrollBar>
      <ScrollButton aria-label="Scroll up">
        <Chevron w={11} h={8} color="#4c4c4c" stroke={2} />
      </ScrollButton>
      <ScrollTrack>
        <ScrollThumb />
      </ScrollTrack>
      <ScrollButton aria-label="Scroll down">
        <Chevron w={11} h={8} color="#4c4c4c" stroke={2} down />
      </ScrollButton>
    </ScrollBar>
  </Workspace>
);

const Status = () => {
  const [zoom, setZoom] = useState(50);
  return (
    <StatusBar>
      <StatusCell>
        <svg width="16" height="18" viewBox="0 0 16 18" fill="#3c4656">
          <path d="M8 1V17M1 9H15" stroke="#3c4656" strokeWidth="1" />
          <path d="M8 0L10 3H6ZM8 18L10 15H6ZM0 9L3 7V11ZM16 9L13 7V11Z" />
        </svg>
        418, 529px
      </StatusCell>
      <StatusCell>
        <svg width="19" height="18" viewBox="0 0 19 18" fill="none">
          <rect
            x="3.500"
            y="1.500"
            width="15"
            height="13"
            stroke="#555"
            strokeDasharray="1 1"
          />
          <path
            d="M1.500 1V14M4 16.500H18M0 3L1.500 1L3 3M16 15L18 16.500L16 18"
            stroke="#3d4654"
          />
        </svg>
      </StatusCell>
      <StatusCell>
        <svg width="19" height="18" viewBox="0 0 19 18" fill="none">
          <rect
            x="3.500"
            y="1.500"
            width="15"
            height="13"
            fill="#eaf5fd"
            stroke="#3f5f86"
          />
          <path
            d="M1.500 1V14M4 16.500H18M0 3L1.500 1L3 3M16 15L18 16.500L16 18"
            stroke="#3d4654"
          />
        </svg>
        1152 × 648px
      </StatusCell>
      <StatusCell />
      <ZoomControls>
        <label htmlFor="zoom">100%</label>
        <RoundButton aria-label="Zoom out">
          <svg width="10" height="10" viewBox="0 0 10 10">
            <path d="M0 5H10" stroke="#444" strokeWidth="2" />
          </svg>
        </RoundButton>
        <ZoomSlider
          id="zoom"
          type="range"
          value={zoom}
          onChange={(e) => setZoom(e.target.value)}
        />
        <RoundButton aria-label="Zoom in">
          <svg width="10" height="10" viewBox="0 0 10 10">
            <path d="M0 5H10M5 0V10" stroke="#444" strokeWidth="2" />
          </svg>
        </RoundButton>
        <Grip>
          <svg width="11" height="11" viewBox="0 0 11 11" fill="#b4b4b4">
            <path d="M8 0H11V3H8ZM8 4H11V7H8ZM8 8H11V11H8ZM4 4H7V7H4ZM4 8H7V11H4ZM0 8H3V11H0Z" />
          </svg>
        </Grip>
      </ZoomControls>
    </StatusBar>
  );
};

const PaintWindow = () => (
  <Window>
    <TitleBar>
      <QuickAccess>
        <PaletteIcon size={20} />
        <TitleDivider />
        <QuickButton aria-label="Save">
          <SaveIcon />
        </QuickButton>
        <QuickButton aria-label="Undo">
          <UndoIcon color="#48a8e0" />
        </QuickButton>
        <QuickButton aria-label="Redo">
          <UndoIcon color="#a9c0d2" flip />
        </QuickButton>
        <QuickButton aria-label="Customize toolbar" $width={18}>
          <svg width="7" height="8" viewBox="0 0 7 8" fill="#e6eef2">
            <path d="M0 0H7V1H0ZM0 3H7L3.500 7Z" />
          </svg>
        </QuickButton>
        <TitleDivider />
      </QuickAccess>
      <Title>Untitled - Paint</Title>
      <CaptionButton aria-label="Minimize">
        <svg width="12" height="12" viewBox="0 0 12 12">
          <path d="M0 5.500H12" stroke="#fff" />
        </svg>
      </CaptionButton>
      <CaptionButton aria-label="Maximize">
        <svg width="12" height="12" viewBox="0 0 12 12" fill="none">
          <path d="M0.500 0.500H11.500V11.500H0.500Z" stroke="#fff" />
        </svg>
      </CaptionButton>
      <CaptionButton aria-label="Close">
        <svg width="12" height="12" viewBox="0 0 12 12">
          <path d="M0 0L12 12M12 0L0 12" stroke="#fff" strokeWidth="1.200" />
        </svg>
      </CaptionButton>
    </TitleBar>
    <TabBar>
      <Tab $width={70} $file>
        File
      </Tab>
      <Tab $width={69} $active>
        Home
      </Tab>
      <Tab $width={63}>View</Tab>
      <TabBarEnd>
        <Chevron w={14} h={9} color="#a8a8a8" stroke={1.5} />
        <HelpButton aria-label="Help">?</HelpButton>
      </TabBarEnd>
    </TabBar>
    <RibbonBar />
    <DrawingArea />
    <Status />
  </Window>
);

const App = () => (
  <>
    <GlobalStyle />
    <Desktop>
      <ShortcutGrid>
        {shortcuts.map(({ label, Icon, focused }, i) => (
          <Shortcut key={i}>
            <ShortcutIcon $focused={focused}>
              <Icon />
            </ShortcutIcon>
            <ShortcutLabel>{label}</ShortcutLabel>
          </Shortcut>
        ))}
      </ShortcutGrid>
      <PaintWindow />
      <TaskBar>
        <Task $width={192} $pad={6}>
          <svg width="32" height="26" viewBox="0 0 32 26">
            <path d="M2 3H24L26 23H2Z" fill="#ffe08e" />
          </svg>
          qtcodes
        </Task>
        <Task $width={190} $pad={9}>
          <svg width="27" height="27" viewBox="0 0 27 27">
            <BandicamDisc cx={13.5} cy={13.5} r={13} />
          </svg>
          Bandicam
        </Task>
        <Task $width={200} $pad={13} $active>
          <PaletteIcon size={27} />
          Untitled - Paint
        </Task>
        <Tray>
          <TrayButton aria-label="Show hidden icons">
            <Chevron w={17} h={11} color="#fff" stroke={1.2} />
          </TrayButton>
          <TrayButton aria-label="Microphone">
            <svg width="13" height="20" viewBox="0 0 13 20" fill="none">
              <rect x="2" y="0" width="9" height="15" rx="2" fill="#fff" />
              <path
                d="M0.500 11Q0.500 17 6.500 17Q12.500 17 12.500 11M6.500 17V19M3 19.500H10"
                stroke="#fff"
              />
            </svg>
          </TrayButton>
          <TrayButton aria-label="Battery">
            <svg width="19" height="12" viewBox="0 0 19 12" fill="none">
              <path
                d="M0.500 0.500H16.500V11.500H0.500ZM18 4V8"
                stroke="#fff"
                strokeWidth="1.300"
              />
              <rect x="2.500" y="3" width="11.500" height="6" fill="#fff" />
            </svg>
          </TrayButton>
          <TrayButton aria-label="Network">
            <svg
              width="20"
              height="17"
              viewBox="0 0 20 17"
              fill="none"
              stroke="#fff"
            >
              <path d="M6 1.500H19.500V12.500H3.500V7M11.500 13V16M8 16.500H15" />
              <path d="M0.500 0.500H5.500V5.500H0.500ZM3 5.500V8" />
            </svg>
          </TrayButton>
          <TrayButton aria-label="Volume">
            <svg
              width="20"
              height="16"
              viewBox="0 0 20 16"
              fill="none"
              stroke="#fff"
            >
              <path d="M0.500 5.500H3L7.500 1.500V14.500L3 10.500H0.500Z" />
              <path d="M10.500 5Q12 8 10.500 11M13.500 3Q16 8 13.500 13" />
              <path d="M16.500 1Q20 8 16.500 15" opacity="0.400" />
            </svg>
          </TrayButton>
          <TrayButton aria-label="Input language">
            <ImeMode>中</ImeMode>
          </TrayButton>
          <TrayButton aria-label="Input method" $width={32}>
            <ImeBadge>拼</ImeBadge>
          </TrayButton>
          <Clock>{"8:19 PM\n4/10/2023"}</Clock>
        </Tray>
      </TaskBar>
    </Desktop>
  </>
);

export default App;
